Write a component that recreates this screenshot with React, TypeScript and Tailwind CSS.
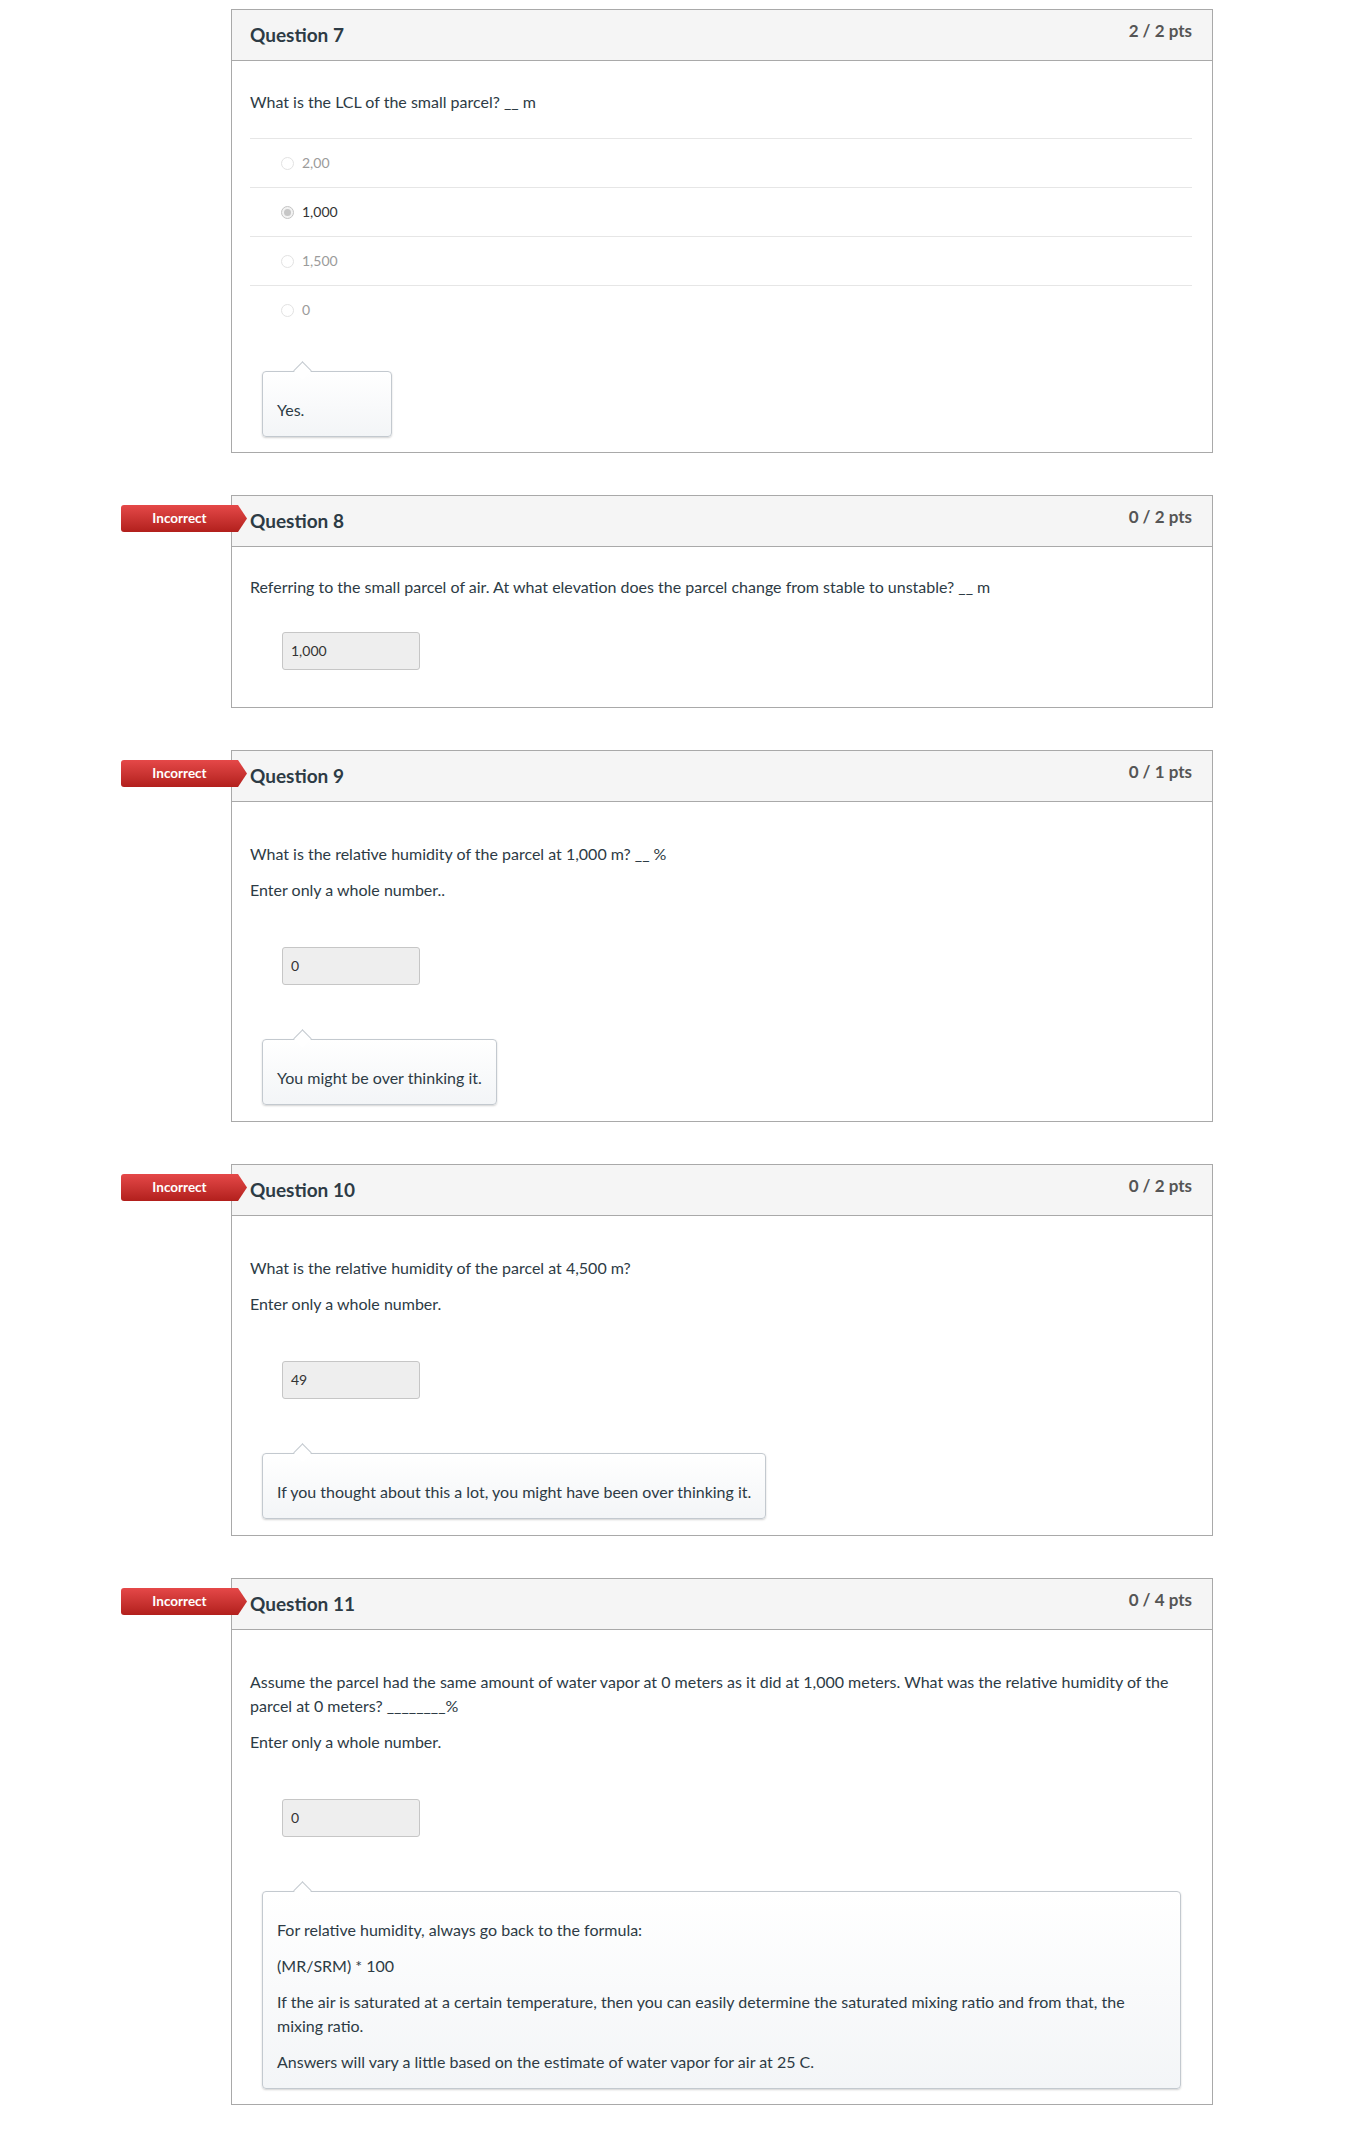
import React from 'react';

type Answer = { label: string; selected?: boolean };

// red "Incorrect" flag hanging off the left edge of a card
const IncorrectFlag: React.FC = () => (
  <div className="absolute left-[-111px] top-[9px] flex h-[27px] w-[126px] items-center justify-center rounded-l-[3px] bg-gradient-to-b from-[#e54848] to-[#b21f1c] pr-[9px] text-[13.5px] font-bold text-white [clip-path:polygon(0_0,calc(100%_-_9px)_0,100%_50%,calc(100%_-_9px)_100%,0_100%)]">
    Incorrect
  </div>
);

const Feedback: React.FC<{ className?: string; children: React.ReactNode }> = ({ className = '', children }) => (
  <div className={`relative inline-block min-w-[130px] max-w-[919px] rounded-[4px] border border-[#c3c9cf] bg-gradient-to-b from-white to-[#f3f5f7] px-[14px] pt-[26px] pb-[14px] text-[16px] leading-6 text-[#2d3b45] shadow-[0_1px_2px_rgba(0,0,0,0.18)] ${className}`}>
    <div className="absolute left-[33px] top-[-8px] h-[13px] w-[13px] rotate-45 border-l border-t border-[#c3c9cf] bg-white" />
    <div className="flex flex-col gap-[12px]">{children}</div>
  </div>
);

const AnswerInput: React.FC<{ value: string }> = ({ value }) => (
  <div className="ml-[32px] mt-[45px] flex h-[38px] w-[138px] items-center rounded-[3px] border border-[#c6c6c6] bg-[#eeeeee] pl-[8px] text-[14px] text-[#333]">
    {value}
  </div>
);

const Card: React.FC<{
  title: string;
  points: string;
  incorrect?: boolean;
  children: React.ReactNode;
  bodyClass: string;
}> = ({ title, points, incorrect, children, bodyClass }) => (
  <div className="relative mb-[42px] w-[982px] border border-[#a9a9a9] bg-white">
    {incorrect && <IncorrectFlag />}
    <div className="flex h-[51px] items-center justify-between border-b border-[#a9a9a9] bg-[#f5f5f5] pl-[18px] pr-[20px]">
      <h2 className="text-[19px] font-bold text-[#2d3b45]">{title}</h2>
      <span className="pb-[8px] text-[17px] font-bold text-[#555]">{points}</span>
    </div>
    <div className={`pl-[18px] pr-[20px] text-[16px] leading-6 text-[#2d3b45] ${bodyClass}`}>{children}</div>
  </div>
);

const RadioRow: React.FC<{ answer: Answer }> = ({ answer }) => (
  <div className="flex h-[49px] items-center border-t border-[#e6e6e6] pl-[31px]">
    {answer.selected ? (
      <span className="flex h-[13px] w-[13px] items-center justify-center rounded-full border border-[#c4c4c4] bg-[#f2f2f2]">
        <span className="h-[7px] w-[7px] rounded-full bg-[#c6c6c6]" />
      </span>
    ) : (
      <span className="h-[13px] w-[13px] rounded-full border border-[#e2e2e2] bg-white" />
    )}
    <span className={`ml-[8px] text-[14px] ${answer.selected ? 'text-[#333]' : 'text-[#9b9b9b]'}`}>{answer.label}</span>
  </div>
);

const answers7: Answer[] = [{ label: '2,00' }, { label: '1,000', selected: true }, { label: '1,500' }, { label: '0' }];

export default function App() {
  return (
    <div className="min-h-[2138px] bg-white pl-[231px] pt-[9px] font-['Lato','Noto_Sans',sans-serif]">
      <Card title="Question 7" points="2 / 2 pts" bodyClass="pt-[29px] pb-[15px]">
        <p>What is the LCL of the small parcel? __ m</p>
        <div className="mt-[24px]">
          {answers7.map((a) => (
            <RadioRow key={a.label} answer={a} />
          ))}
        </div>
        <Feedback className="ml-[12px] mt-[37px]">
          <p>Yes.</p>
        </Feedback>
      </Card>

      <Card title="Question 8" points="0 / 2 pts" incorrect bodyClass="pt-[28px] pb-[37px]">
        <p>Referring to the small parcel of air. At what elevation does the parcel change from stable to unstable? __ m</p>
        <div className="-mt-[12px]">
          <AnswerInput value="1,000" />
        </div>
      </Card>

      <Card title="Question 9" points="0 / 1 pts" incorrect bodyClass="pt-[40px] pb-[16px]">
        <div className="flex flex-col gap-[12px]">
          <p>What is the relative humidity of the parcel at 1,000 m? __ %</p>
          <p>Enter only a whole number..</p>
        </div>
        <AnswerInput value="0" />
        <Feedback className="ml-[12px] mt-[54px]">
          <p>You might be over thinking it.</p>
        </Feedback>
      </Card>

      <Card title="Question 10" points="0 / 2 pts" incorrect bodyClass="pt-[40px] pb-[16px]">
        <div className="flex flex-col gap-[12px]">
          <p>What is the relative humidity of the parcel at 4,500 m?</p>
          <p>Enter only a whole number.</p>
        </div>
        <AnswerInput value="49" />
        <Feedback className="ml-[12px] mt-[54px]">
          <p>If you thought about this a lot, you might have been over thinking it.</p>
        </Feedback>
      </Card>

      <Card title="Question 11" points="0 / 4 pts" incorrect bodyClass="pt-[40px] pb-[15px]">
        <div className="flex flex-col gap-[12px]">
          <p>
            Assume the parcel had the same amount of water vapor at 0 meters as it did at 1,000 meters. What was the relative
            humidity of the parcel at 0 meters? ________%
          </p>
          <p>Enter only a whole number.</p>
        </div>
        <AnswerInput value="0" />
        <Feedback className="ml-[12px] mt-[54px]">
          <p>For relative humidity, always go back to the formula:</p>
          <p>(MR/SRM) * 100</p>
          <p>
            If the air is saturated at a certain temperature, then you can easily determine the saturated mixing ratio and
            from that, the mixing ratio.
          </p>
          <p>Answers will vary a little based on the estimate of water vapor for air at 25 C.</p>
        </Feedback>
      </Card>
    </div>
  );
}
